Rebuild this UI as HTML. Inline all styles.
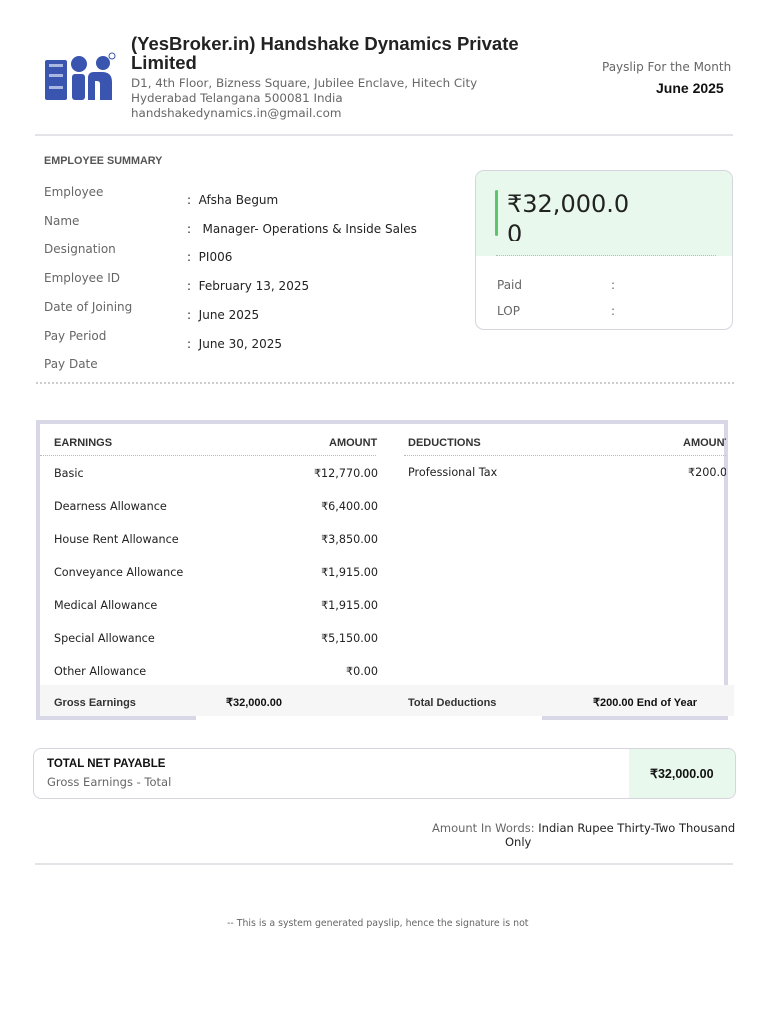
<!DOCTYPE html>
<html><head><meta charset="utf-8"><style>
*{margin:0;padding:0;box-sizing:border-box}
body{width:768px;height:1024px;background:#fff;position:relative;font-family:"DejaVu Sans","Liberation Sans",sans-serif;color:#222;overflow:hidden}
.a{position:absolute;white-space:nowrap}
.s{font-size:12px}
.t{font-size:11.2px}
.g{color:#666}
.b{font-family:"Liberation Sans",sans-serif;font-weight:bold}
.r{line-height:14px;height:14px}
</style></head><body>
<svg class="a" style="left:42px;top:50px" width="74" height="52" viewBox="0 0 74 52">
<g fill="#3a55b0">
<rect x="3" y="10" width="22" height="40" rx="2"/>
<circle cx="37" cy="14" r="8"/><circle cx="61" cy="13" r="7"/>
<rect x="30" y="24" width="13" height="26" rx="3"/>
<path d="M46 50V28q0-6 6-6h8q10 0 10 10v18h-12V34q0-3-3-3h-2v19z"/>
</g>
<g fill="#aab7e0"><rect x="7" y="14" width="14" height="3"/><rect x="7" y="24" width="14" height="3"/><rect x="7" y="36" width="14" height="3"/></g>
<circle cx="70" cy="6" r="3" fill="none" stroke="#3a55b0" stroke-width="1"/>
</svg>
<div class="a b" style="left:131px;top:34px;font-size:18.5px;line-height:19px;color:#222">(YesBroker.in) Handshake Dynamics Private<br>Limited</div>
<div class="a g" style="left:131px;top:76px;font-size:11.9px;line-height:15px">D1, 4th Floor, Bizness Square, Jubilee Enclave, Hitech City<br>Hyderabad Telangana 500081 India<br>handshakedynamics.in@gmail.com</div>
<div class="a g" style="left:602px;top:60px;font-size:12px">Payslip For the Month</div>
<div class="a b" style="left:656px;top:80px;font-size:14px;color:#111">June 2025</div>
<div class="a" style="left:35px;top:134px;width:698px;height:2px;background:#e3e3e8"></div>
<div class="a b" style="left:44px;top:155px;font-size:10.8px;color:#555">EMPLOYEE SUMMARY</div>
<div class="a g s" style="left:44px;top:178px;line-height:28.7px">Employee<br>Name<br>Designation<br>Employee ID<br>Date of Joining<br>Pay Period<br>Pay Date</div>
<div class="a s" style="left:187px;top:186px;line-height:28.7px">:&nbsp; Afsha Begum<br>:&nbsp;&nbsp; Manager- Operations &amp; Inside Sales<br>:&nbsp; PI006<br>:&nbsp; February 13, 2025<br>:&nbsp; June 2025<br>:&nbsp; June 30, 2025</div>
<div class="a" style="left:475px;top:170px;width:258px;height:160px;border:1px solid #d5d5de;border-radius:9px;overflow:hidden">
<div style="height:85px;background:#e8f8ec;position:relative">
<div class="a" style="left:19px;top:19px;width:3px;height:46px;background:#5cc46a;border-radius:2px"></div>
<div class="a" style="left:31px;top:18px;font-size:24px;line-height:30px;height:52px;overflow:hidden;white-space:normal;width:135px">₹32,000.0 0</div>
<div class="a" style="left:20px;top:84px;width:220px;border-top:1px dotted #bbb"></div>
</div>
<div class="a g s" style="left:21px;top:101px;line-height:26px">Paid<br>LOP</div>
<div class="a g s" style="left:135px;top:101px;line-height:26px">:<br>:</div>
</div>
<div class="a" style="left:36px;top:382px;width:698px;border-top:2px dotted #ccc"></div>
<div class="a" style="left:36px;top:420px;width:692px;height:300px;border:4px solid #d8d7e5;border-bottom:none"></div>
<div class="a" style="left:36px;top:716px;width:160px;height:4px;background:#d8d7e5"></div>
<div class="a" style="left:542px;top:716px;width:186px;height:4px;background:#d8d7e5"></div>
<div class="a b r" style="left:54px;top:436px;font-size:11px;color:#333">EARNINGS</div>
<div class="a b r" style="left:329px;top:436px;font-size:11px;color:#333">AMOUNT</div>
<div class="a b r" style="left:408px;top:436px;font-size:11px;color:#333">DEDUCTIONS</div>
<div class="a b r" style="left:683px;top:436px;font-size:11px;color:#333;width:43px;overflow:hidden">AMOUNT</div>
<div class="a" style="left:40px;top:455px;width:336px;border-top:1px dotted #bbb"></div>
<div class="a" style="left:404px;top:455px;width:322px;border-top:1px dotted #bbb"></div>
<div class="a t" style="left:54px;top:457px;line-height:33px">Basic<br>Dearness Allowance<br>House Rent Allowance<br>Conveyance Allowance<br>Medical Allowance<br>Special Allowance<br>Other Allowance</div>
<div class="a t" style="right:390px;top:457px;line-height:33px;text-align:right">₹12,770.00<br>₹6,400.00<br>₹3,850.00<br>₹1,915.00<br>₹1,915.00<br>₹5,150.00<br>₹0.00</div>
<div class="a t" style="left:408px;top:466px">Professional Tax</div>
<div class="a t" style="left:688px;top:466px;width:38px;overflow:hidden">₹200.00</div>
<div class="a" style="left:40px;top:685px;width:694px;height:31px;background:#f6f6f7"></div>
<div class="a b r" style="left:54px;top:696px;font-size:11px;color:#333">Gross Earnings</div>
<div class="a b r" style="left:226px;top:696px;font-size:11px;color:#111">₹32,000.00</div>
<div class="a b r" style="left:408px;top:696px;font-size:11px;color:#333">Total Deductions</div>
<div class="a b r" style="left:593px;top:696px;font-size:11px;color:#111">₹200.00 End of Year</div>
<div class="a" style="left:33px;top:748px;width:703px;height:51px;border:1px solid #d5d5de;border-radius:8px;overflow:hidden">
<div class="a" style="right:0;top:0;width:106px;height:51px;background:#e8f8ec"></div>
<div class="a b" style="left:13px;top:9px;font-size:11.5px;color:#111">TOTAL NET PAYABLE</div>
<div class="a g" style="left:13px;top:26px;font-size:11.5px">Gross Earnings - Total</div>
<div class="a b r" style="left:616px;top:18px;font-size:12.5px;color:#111">₹32,000.00</div>
</div>
<div class="a" style="left:432px;top:821px;font-size:11.5px"><span class="g">Amount In Words:</span> Indian Rupee Thirty-Two Thousand</div>
<div class="a" style="left:505px;top:835px;font-size:11.5px">Only</div>
<div class="a" style="left:35px;top:863px;width:698px;height:2px;background:#e3e3e8"></div>
<div class="a g" style="left:227px;top:918px;font-size:9.4px">-- This is a system generated payslip, hence the signature is not</div>
</body></html>
